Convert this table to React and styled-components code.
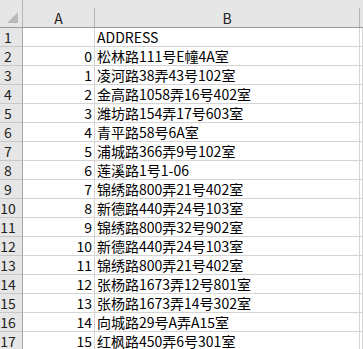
import React from "react";
import styled, { createGlobalStyle } from "styled-components";

const Global = createGlobalStyle`
  html, body { margin: 0; padding: 0; background: #fff; overflow: hidden; }
  body { font-family: "Noto Sans CJK SC", "Liberation Sans", sans-serif; }
`;

const Sheet = styled.div`
  display: grid;
  grid-template-columns: 23px 72px 265px 1fr;
  grid-auto-rows: 19px;
  grid-template-rows: 28px;
  width: 363px;
  height: 349px;
  overflow: hidden;
  font-size: 14px;
  color: #000;
`;

const Corner = styled.div`
  position: relative;
  background: #e6e6e6;
  border-right: 1px solid #b4b4b4;
  border-bottom: 1px solid #9b9b9b;
  svg { position: absolute; right: 3px; bottom: 3px; }
`;

const ColHeader = styled.div`
  position: relative;
  background: #e6e6e6;
  border-bottom: 1px solid #9b9b9b;
  display: flex;
  align-items: flex-end;
  justify-content: center;
  line-height: 18px;
  color: #222;
  &::after {
    content: "";
    position: absolute;
    right: 0;
    top: 8px;
    bottom: 0;
    width: 1px;
    background: ${(p) => (p.$last ? "transparent" : "#b4b4b4")};
  }
  padding-right: ${(p) => (p.$last ? "0" : "1px")};
`;

const RowHeader = styled.div`
  background: #e6e6e6;
  border-right: 1px solid #a6a6a6;
  border-bottom: 1px solid #c8c8c8;
  display: flex;
  align-items: flex-end;
  justify-content: center;
  padding-right: 6px;
  line-height: 18px;
  color: #222;
`;

const Cell = styled.div`
  border-right: 1px solid #d4d4d4;
  border-bottom: 1px solid #d4d4d4;
  display: flex;
  align-items: flex-end;
  justify-content: ${(p) => (p.$num ? "flex-end" : "flex-start")};
  padding: ${(p) => (p.$num ? "0 2px 0 0" : "0 0 0 2px")};
  line-height: 18px;
  white-space: nowrap;
  overflow: hidden;
`;

const rows = [
  ["", "ADDRESS"],
  ["0", "松林路111号E幢4A室"],
  ["1", "凌河路38弄43号102室"],
  ["2", "金高路1058弄16号402室"],
  ["3", "潍坊路154弄17号603室"],
  ["4", "青平路58号6A室"],
  ["5", "浦城路366弄9号102室"],
  ["6", "莲溪路1号1-06"],
  ["7", "锦绣路800弄21号402室"],
  ["8", "新德路440弄24号103室"],
  ["9", "锦绣路800弄32号902室"],
  ["10", "新德路440弄24号103室"],
  ["11", "锦绣路800弄21号402室"],
  ["12", "张杨路1673弄12号801室"],
  ["13", "张杨路1673弄14号302室"],
  ["14", "向城路29号A弄A15室"],
  ["15", "红枫路450弄6号301室"],
];

export default function App() {
  return (
    <>
      <Global />
      <Sheet>
        <Corner>
          <svg width="12" height="12" viewBox="0 0 12 12">
            <polygon points="11,0 11,11 0,11" fill="#b9b9b9" />
          </svg>
        </Corner>
        <ColHeader>A</ColHeader>
        <ColHeader>B</ColHeader>
        <ColHeader $last />
        {rows.map((r, i) => (
          <React.Fragment key={i}>
            <RowHeader>{i + 1}</RowHeader>
            <Cell $num>{r[0]}</Cell>
            <Cell>{r[1]}</Cell>
            <Cell />
          </React.Fragment>
        ))}
      </Sheet>
    </>
  );
}
